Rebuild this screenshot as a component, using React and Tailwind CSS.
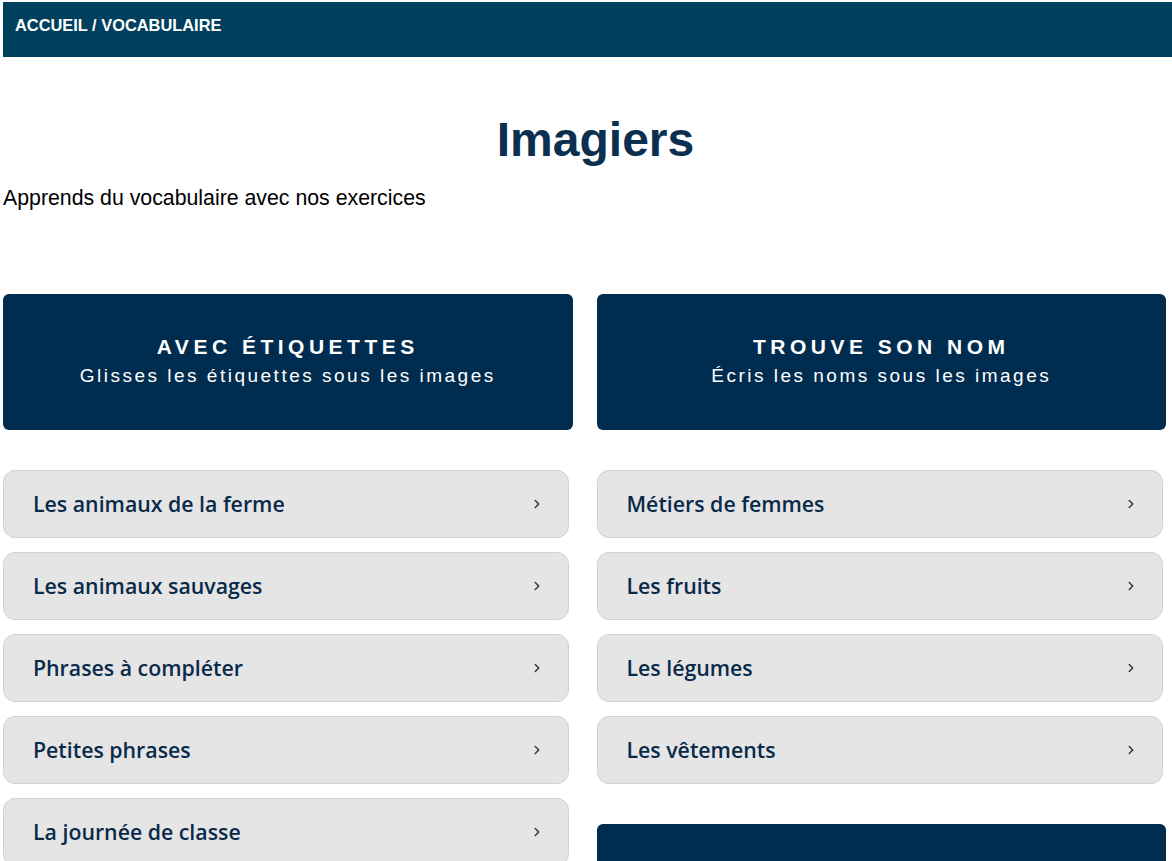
import React from 'react';
import { ChevronRight } from 'lucide-react';

const left = [
  'Les animaux de la ferme',
  'Les animaux sauvages',
  'Phrases à compléter',
  'Petites phrases',
  'La journée de classe',
];

const right = ['Métiers de femmes', 'Les fruits', 'Les légumes', 'Les vêtements'];

function Banner({ title, subtitle }) {
  return (
    <div className="h-[136px] rounded-md bg-[#002d4f] flex flex-col items-center justify-center pb-[3px] text-white font-['Liberation_Sans',Arial,sans-serif]">
      <div className="text-[21px] font-bold tracking-[4.5px] leading-7 mb-[3px]">{title}</div>
      <div className="text-[19px] tracking-[2.5px] leading-6">{subtitle}</div>
    </div>
  );
}

function Item({ label }) {
  return (
    <a className="w-[566px] h-[68px] rounded-xl bg-[#e5e5e5] border border-[#d2d2d2] flex items-center justify-between pl-[29px] pr-[24px] text-[#0a2a4a] font-['Open_Sans',sans-serif] font-semibold text-[21.3px] cursor-pointer">
      <span>{label}</span>
      <ChevronRight size={14} strokeWidth={2.5} className="text-[#283848]" />
    </a>
  );
}

export default function App() {
  return (
    <div className="bg-white min-h-screen pt-[2px] pl-[3px] font-['Liberation_Sans',Arial,sans-serif]">
      <div className="h-[55px] bg-[#003f5d] flex items-center pl-3 pb-[8px] text-white font-bold text-[16.4px]">
        ACCUEIL / VOCABULAIRE
      </div>

      <div className="w-[1163px]">
        <h1 className="mt-[54px] pl-[22px] text-center text-[48px] font-bold leading-[58px] text-[#0b2f50]">Imagiers</h1>
        <p className="mt-[17px] text-[21.3px] leading-6 text-black">Apprends du vocabulaire avec nos exercices</p>

        <div className="mt-[84px] grid grid-cols-2 gap-x-6">
          <div className="flex flex-col">
            <Banner title="AVEC ÉTIQUETTES" subtitle="Glisses les étiquettes sous les images" />
            <div className="mt-10 flex flex-col gap-[14px]">
              {left.map((l) => (
                <Item key={l} label={l} />
              ))}
            </div>
          </div>
          <div className="flex flex-col">
            <Banner title="TROUVE SON NOM" subtitle="Écris les noms sous les images" />
            <div className="mt-10 flex flex-col gap-[14px]">
              {right.map((l) => (
                <Item key={l} label={l} />
              ))}
            </div>
            <div className="mt-10">
              <Banner title="" subtitle="" />
            </div>
          </div>
        </div>
      </div>
    </div>
  );
}
